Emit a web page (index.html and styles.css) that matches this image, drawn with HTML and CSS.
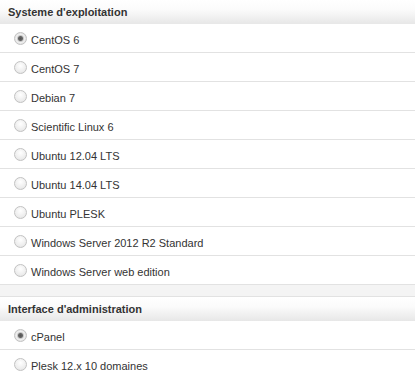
FILE: index.html
```html
<!DOCTYPE html>
<html lang="fr">

<head>
    <meta charset="UTF-8">
    <meta name="viewport" content="width=device-width, initial-scale=1.0">
    <title>Configuration</title>
    <link rel="stylesheet" href="styles.css">
</head>

<body>

    <div class="group">
        <div class="group-title">Systeme d'exploitation</div>
        <label class="option"><input type="radio" name="os" checked><span>CentOS 6</span></label>
        <label class="option"><input type="radio" name="os"><span>CentOS 7</span></label>
        <label class="option"><input type="radio" name="os"><span>Debian 7</span></label>
        <label class="option"><input type="radio" name="os"><span>Scientific Linux 6</span></label>
        <label class="option"><input type="radio" name="os"><span>Ubuntu 12.04 LTS</span></label>
        <label class="option"><input type="radio" name="os"><span>Ubuntu 14.04 LTS</span></label>
        <label class="option"><input type="radio" name="os"><span>Ubuntu PLESK</span></label>
        <label class="option"><input type="radio" name="os"><span>Windows Server 2012 R2 Standard</span></label>
        <label class="option"><input type="radio" name="os"><span>Windows Server web edition</span></label>
    </div>

    <div class="spacer"></div>

    <div class="group">
        <div class="group-title">Interface d'administration</div>
        <label class="option"><input type="radio" name="panel" checked><span>cPanel</span></label>
        <label class="option"><input type="radio" name="panel"><span>Plesk 12.x 10 domaines</span></label>
    </div>

</body>

</html>
```

FILE: styles.css
```css
body {
    font-family: Arial, "Liberation Sans", sans-serif;
    margin: 0;
    background-color: #fff;
    color: #333;
    font-size: 11px;
}

.group-title {
    height: 24px;
    line-height: 24px;
    padding-left: 8px;
    font-weight: bold;
    color: #333;
    background: linear-gradient(#ffffff, #fbfbfb 40%, #e7e7e7);
}

.option {
    display: flex;
    align-items: center;
    height: 24px;
    padding: 4px 0 0 14px;
    border-bottom: 1px solid #e2e2e2;
    cursor: pointer;
}

.option:last-child {
    border-bottom: none;
}

.option input {
    appearance: none;
    -webkit-appearance: none;
    width: 13px;
    height: 13px;
    margin: 0 4px 0 0;
    border: 1px solid #c2c2c2;
    border-radius: 50%;
    background: radial-gradient(circle at 50% 35%, #ffffff, #ebebeb 70%, #d8d8d8);
    box-sizing: border-box;
    position: relative;
    top: -2px;
}

.option input:checked {
    background: radial-gradient(circle, #555 0, #666 2px, #c8c8c8 3px, #f0f0f0 4px, #e0e0e0 6px);
}

.spacer {
    height: 13px;
    background-color: #f4f4f4;
    border-top: 1px solid #e2e2e2;
    border-bottom: 1px solid #e2e2e2;
    box-sizing: border-box;
}
```
